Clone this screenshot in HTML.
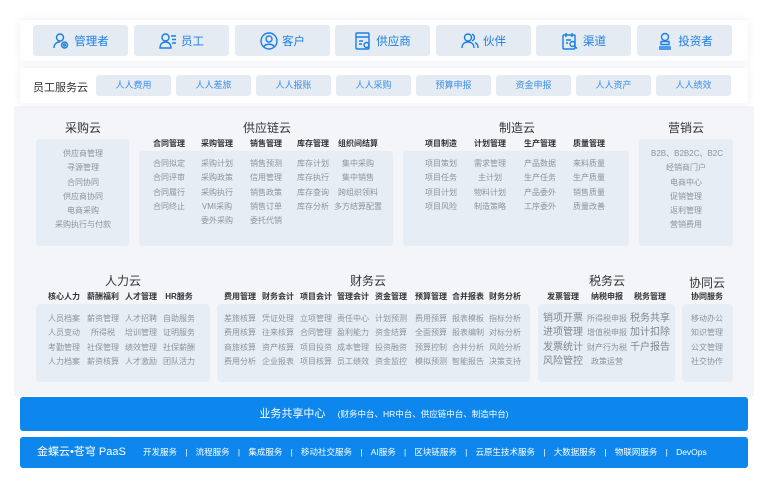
<!DOCTYPE html>
<html><head><meta charset="utf-8">
<style>
*{margin:0;padding:0;box-sizing:border-box}
body{width:768px;height:489px;background:#fff;position:relative;overflow:hidden;font-family:"Liberation Sans","Noto Sans CJK SC",sans-serif}
.a{position:absolute}
.card{position:absolute;background:#fff;border-radius:3px;box-shadow:0 0 8px rgba(120,140,180,.15)}
.btn{position:absolute;top:25px;width:95px;height:31px;background:#e4ebf3;border-radius:3px;color:#1b7fe3;font-size:11.5px;display:flex;align-items:center;justify-content:center;gap:4px}
.btn svg{width:18px;height:18px}
.chip{position:absolute;top:75px;width:75px;height:21px;background:#e4ebf3;border-radius:3px;color:#3d8fe6;font-size:9px;text-align:center;line-height:21px}
.box{position:absolute;background:#e7edf4;border-radius:4px}
.t{position:absolute;color:#333;font-size:12px;text-align:center;width:100px;margin-left:-50px}
.h{position:absolute;color:#333;font-size:8px;font-weight:bold;text-align:center;width:60px;margin-left:-30px}
.c{position:absolute;color:#8a94a0;font-size:8px;text-align:center;width:70px;margin-left:-35px;line-height:14.3px;white-space:nowrap}
.c.big{font-size:10px;color:#7d8792}
.bar{position:absolute;left:20px;width:728px;background:#0d87ee;border-radius:3px;color:#fff}
.svc{position:absolute;left:123px;width:564px;display:flex;justify-content:space-between}
</style></head><body>
<div class="a" style="left:14px;top:106px;width:740px;height:290px;background:#f3f5f8"></div>
<div class="card" style="left:20px;top:20px;width:728px;height:41px"></div>
<div class="card" style="left:20px;top:68px;width:728px;height:35px"></div>

<div class="btn" style="left:33px"><svg viewBox="0 0 18 18" fill="none" stroke="#1b7fe3" stroke-width="1.4"><circle cx="8" cy="5.5" r="3.5"/><path d="M2 16c0-4 2.5-6 6-6"/><circle cx="12.5" cy="13" r="3"/><circle cx="12.5" cy="13" r="1"/></svg>管理者</div>
<div class="btn" style="left:134px"><svg viewBox="0 0 18 18" fill="none" stroke="#1b7fe3" stroke-width="1.4"><circle cx="6.5" cy="5.5" r="3.5"/><path d="M1 16c0-4 2.5-6 5.5-6s5.5 2 5.5 6z"/><path d="M12 4h5M13 7.5h4M13 11h4"/></svg>员工</div>
<div class="btn" style="left:235px"><svg viewBox="0 0 18 18" fill="none" stroke="#1b7fe3" stroke-width="1.4"><circle cx="9" cy="9" r="8"/><circle cx="9" cy="7" r="3"/><path d="M4 14.5c1.5-3 8.5-3 10 0"/></svg>客户</div>
<div class="btn" style="left:335px"><svg viewBox="0 0 18 18" fill="none" stroke="#1b7fe3" stroke-width="1.4"><rect x="2" y="1" width="13" height="16" rx="1"/><path d="M2 5h13M5 9h4M5 12h3"/><circle cx="12.5" cy="13" r="2.5"/></svg>供应商</div>
<div class="btn" style="left:436px"><svg viewBox="0 0 18 18" fill="none" stroke="#1b7fe3" stroke-width="1.4"><circle cx="7" cy="5.5" r="3.5"/><path d="M1 16c0-4 2.5-6 6-6s6 2 6 6"/><path d="M11 2.2a3.5 3.5 0 0 1 0 6.6M14 10.5c2 1 3 3 3 5.5"/></svg>伙伴</div>
<div class="btn" style="left:536px"><svg viewBox="0 0 18 18" fill="none" stroke="#1b7fe3" stroke-width="1.4"><rect x="2" y="3" width="12" height="14" rx="1"/><path d="M5 1v4M11 1v4M5 8h5M5 11h2"/><circle cx="11.5" cy="12" r="2.5"/><path d="M13.5 14l2.5 2.5"/></svg>渠道</div>
<div class="btn" style="left:637px"><svg viewBox="0 0 18 18" fill="none" stroke="#1b7fe3" stroke-width="1.4"><circle cx="9" cy="5" r="3.5"/><path d="M5 9.5h8v3H5zM3 15h12M3 17h12"/></svg>投资者</div>

<div class="a" style="left:33px;top:79px;font-size:11px;color:#333">员工服务云</div>
<div class="chip" style="left:96px">人人费用</div>
<div class="chip" style="left:176px">人人差旅</div>
<div class="chip" style="left:256px">人人报账</div>
<div class="chip" style="left:336px">人人采购</div>
<div class="chip" style="left:416px">预算申报</div>
<div class="chip" style="left:496px">资金申报</div>
<div class="chip" style="left:576px">人人资产</div>
<div class="chip" style="left:656px">人人绩效</div>

<!-- row 1 -->
<div class="box" style="left:36px;top:139px;width:93px;height:107px"></div>
<div class="box" style="left:139px;top:151px;width:254px;height:95px"></div>
<div class="box" style="left:403px;top:151px;width:226px;height:95px"></div>
<div class="box" style="left:639px;top:139px;width:94px;height:107px"></div>
<div class="t" style="left:83px;top:119px">采购云</div>
<div class="t" style="left:267px;top:119px">供应链云</div>
<div class="t" style="left:517px;top:119px">制造云</div>
<div class="t" style="left:686px;top:119px">营销云</div>

<div class="c" style="left:83px;top:147px">供应商管理<br>寻源管理<br>合同协同<br>供应商协同<br>电商采购<br>采购执行与付款</div>
<div class="c" style="left:686px;top:147px">B2B、B2B2C、B2C<br>经销商门户<br>电商中心<br>促销管理<br>返利管理<br>营销费用</div>

<div class="h" style="left:169px;top:138px">合同管理</div>
<div class="h" style="left:217px;top:138px">采购管理</div>
<div class="h" style="left:266px;top:138px">销售管理</div>
<div class="h" style="left:313px;top:138px">库存管理</div>
<div class="h" style="left:358px;top:138px">组织间结算</div>
<div class="c" style="left:169px;top:157px">合同拟定<br>合同评审<br>合同履行<br>合同终止</div>
<div class="c" style="left:217px;top:157px">采购计划<br>采购政策<br>采购执行<br>VMI采购<br>委外采购</div>
<div class="c" style="left:266px;top:157px">销售预测<br>信用管理<br>销售政策<br>销售订单<br>委托代销</div>
<div class="c" style="left:313px;top:157px">库存计划<br>库存执行<br>库存查询<br>库存分析</div>
<div class="c" style="left:358px;top:157px">集中采购<br>集中销售<br>跨组织领料<br>多方结算配置</div>

<div class="h" style="left:441px;top:138px">项目制造</div>
<div class="h" style="left:490px;top:138px">计划管理</div>
<div class="h" style="left:540px;top:138px">生产管理</div>
<div class="h" style="left:589px;top:138px">质量管理</div>
<div class="c" style="left:441px;top:157px">项目策划<br>项目任务<br>项目计划<br>项目风险</div>
<div class="c" style="left:490px;top:157px">需求管理<br>主计划<br>物料计划<br>制造策略</div>
<div class="c" style="left:540px;top:157px">产品数据<br>生产任务<br>产品委外<br>工序委外</div>
<div class="c" style="left:589px;top:157px">来料质量<br>生产质量<br>销售质量<br>质量改善</div>

<!-- row 2 -->
<div class="box" style="left:36px;top:304px;width:174px;height:78px"></div>
<div class="box" style="left:217px;top:304px;width:313px;height:78px"></div>
<div class="box" style="left:538px;top:304px;width:137px;height:78px"></div>
<div class="box" style="left:682px;top:304px;width:51px;height:78px"></div>
<div class="t" style="left:123px;top:272px">人力云</div>
<div class="t" style="left:368px;top:272px">财务云</div>
<div class="t" style="left:607px;top:272px">税务云</div>
<div class="t" style="left:707px;top:274px">协同云</div>

<div class="h" style="left:64px;top:291px">核心人力</div>
<div class="h" style="left:103px;top:291px">薪酬福利</div>
<div class="h" style="left:141px;top:291px">人才管理</div>
<div class="h" style="left:179px;top:291px">HR服务</div>
<div class="c" style="left:64px;top:312px">人员档案<br>人员变动<br>考勤管理<br>人力档案</div>
<div class="c" style="left:103px;top:312px">薪资管理<br>所得税<br>社保管理<br>薪资核算</div>
<div class="c" style="left:141px;top:312px">人才招聘<br>培训管理<br>绩效管理<br>人才激励</div>
<div class="c" style="left:179px;top:312px">自助服务<br>证明服务<br>社保薪酬<br>团队活力</div>

<div class="h" style="left:240px;top:291px">费用管理</div>
<div class="h" style="left:278px;top:291px">财务会计</div>
<div class="h" style="left:316px;top:291px">项目会计</div>
<div class="h" style="left:353px;top:291px">管理会计</div>
<div class="h" style="left:391px;top:291px">资金管理</div>
<div class="h" style="left:431px;top:291px">预算管理</div>
<div class="h" style="left:468px;top:291px">合并报表</div>
<div class="h" style="left:505px;top:291px">财务分析</div>
<div class="c" style="left:240px;top:312px">差旅核算<br>费用核算<br>商旅核算<br>费用分析</div>
<div class="c" style="left:278px;top:312px">凭证处理<br>往来核算<br>资产核算<br>企业报表</div>
<div class="c" style="left:316px;top:312px">立项管理<br>合同管理<br>项目投资<br>项目核算</div>
<div class="c" style="left:353px;top:312px">责任中心<br>盈利能力<br>成本管理<br>员工绩效</div>
<div class="c" style="left:391px;top:312px">计划预测<br>资金结算<br>投资融资<br>资金监控</div>
<div class="c" style="left:431px;top:312px">费用预算<br>全面预算<br>预算控制<br>模拟预测</div>
<div class="c" style="left:468px;top:312px">报表模板<br>报表编制<br>合并分析<br>智能报告</div>
<div class="c" style="left:505px;top:312px">指标分析<br>对标分析<br>风险分析<br>决策支持</div>

<div class="h" style="left:563px;top:291px">发票管理</div>
<div class="h" style="left:607px;top:291px">纳税申报</div>
<div class="h" style="left:650px;top:291px">税务管理</div>
<div class="c big" style="left:563px;top:312px">销项开票<br>进项管理<br>发票统计<br>风险管控</div>
<div class="c" style="left:607px;top:312px">所得税申报<br>增值税申报<br>财产行为税<br>政策运营</div>
<div class="c big" style="left:650px;top:312px">税务共享<br>加计扣除<br>千户报告</div>
<div class="h" style="left:707px;top:291px">协同服务</div>
<div class="c" style="left:707px;top:312px">移动办公<br>知识管理<br>公文管理<br>社交协作</div>

<div class="bar" style="top:397px;height:34px;font-size:11px;line-height:34px;text-align:center">业务共享中心&nbsp;&nbsp;&nbsp;&nbsp;<span style="font-size:8.5px">(财务中台、HR中台、供应链中台、制造中台)</span></div>
<div class="bar" style="top:437px;height:31px;line-height:31px;font-size:8.5px;white-space:nowrap">
<span class="a" style="left:17px;font-size:11px">金蝶云•苍穹 PaaS</span>
<div class="svc"><span>开发服务</span><span>|</span><span>流程服务</span><span>|</span><span>集成服务</span><span>|</span><span>移动社交服务</span><span>|</span><span>AI服务</span><span>|</span><span>区块链服务</span><span>|</span><span>云原生技术服务</span><span>|</span><span>大数据服务</span><span>|</span><span>物联网服务</span><span>|</span><span>DevOps</span></div>
</div>
</body></html>
